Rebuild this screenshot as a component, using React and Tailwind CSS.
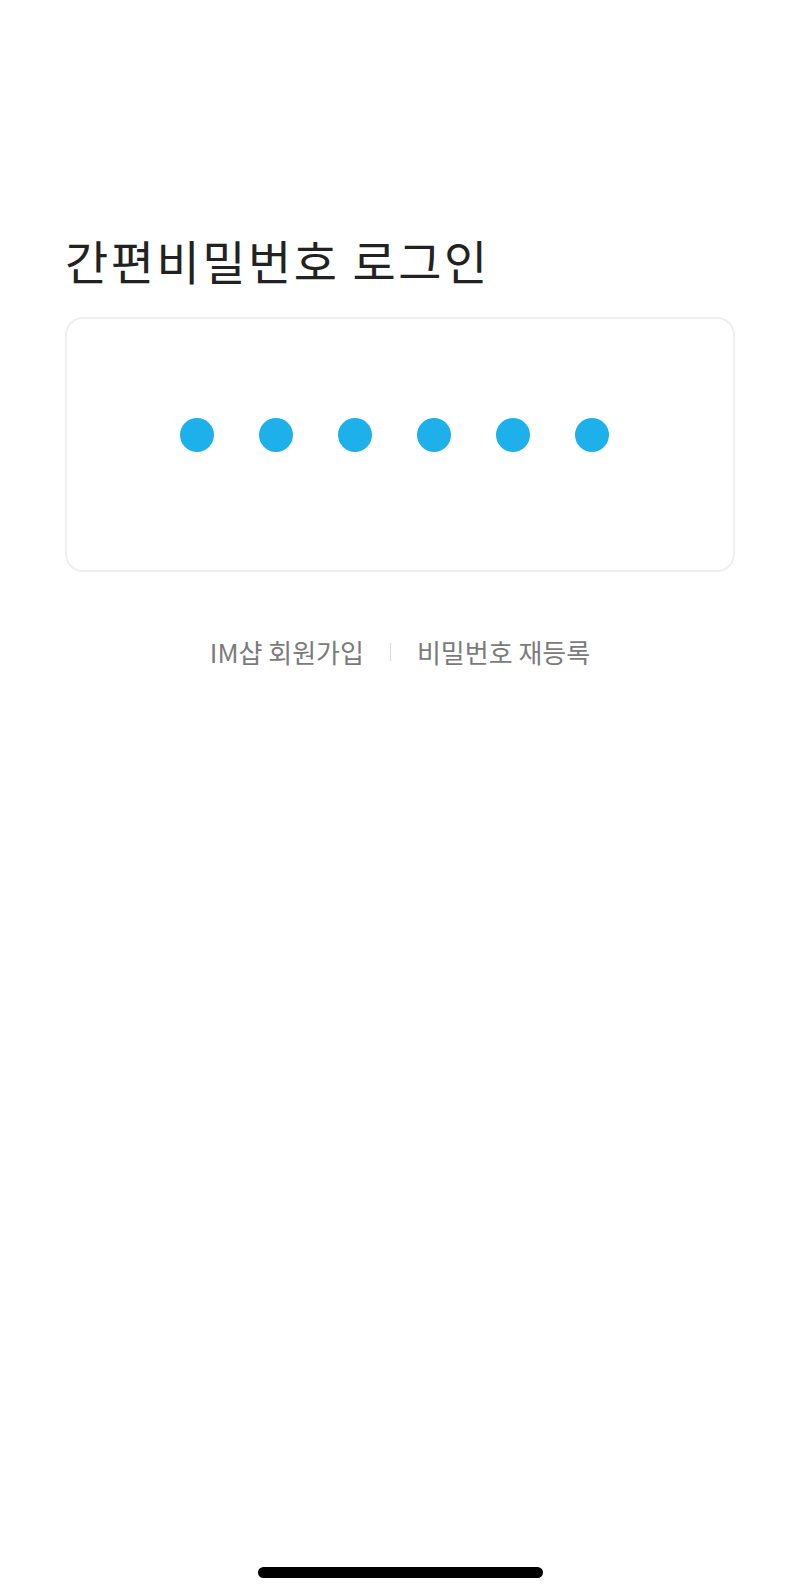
import React from 'react';

const font = { fontFamily: '"Noto Sans CJK KR", "Noto Sans", sans-serif' };

export default function App() {
    const dots = [0, 1, 2, 3, 4, 5];

    return (
        <div className="w-[800px] h-[1596px] bg-white flex flex-col" style={font}>
            <div className="px-[65px] pt-[228px]">
                <h1 className="text-[47px] leading-[64px] font-normal text-[#222222] tracking-[2.5px]">간편비밀번호 로그인</h1>

                <div className="mt-[25px] h-[255px] w-full rounded-[18px] border-2 border-[#efefef] flex items-center justify-center pb-[19px] pr-[12px]">
                    <div className="flex gap-[45px]">
                        {dots.map((d) => (
                            <span key={d} className="w-[34px] h-[34px] rounded-full bg-[#1db0ea]" />
                        ))}
                    </div>
                </div>

                <div className="mt-[62px] flex items-center justify-center gap-[26px] text-[26px] leading-[36px] text-[#7b7b7b]">
                    <span>IM샵 회원가입</span>
                    <span className="w-px h-[18px] bg-[#d8d8d8]" />
                    <span>비밀번호 재등록</span>
                </div>
            </div>

            <div className="mt-auto pb-[18px] flex justify-center">
                <div className="w-[285px] h-[11px] rounded-full bg-black" />
            </div>
        </div>
    );
}
